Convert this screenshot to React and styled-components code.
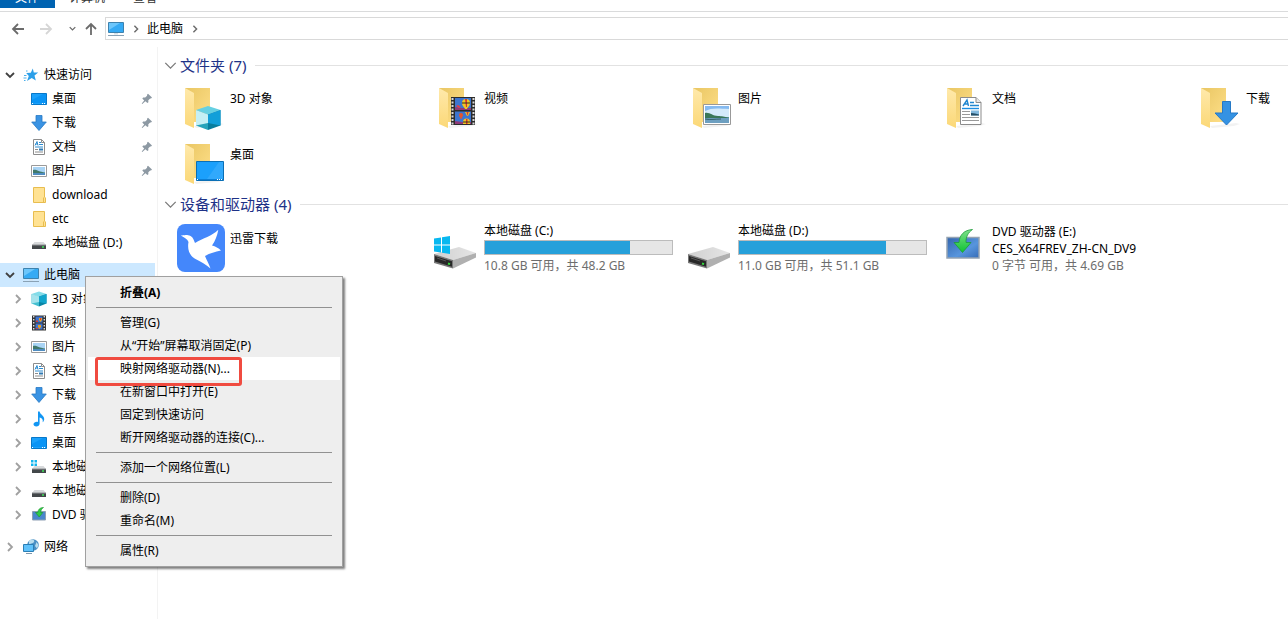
import React, { useState } from "react";
import styled, { createGlobalStyle } from "styled-components";

const GlobalStyle = createGlobalStyle`
  * {
    box-sizing: border-box;
  }
  body {
    margin: 0;
    overflow: hidden;
    background: #fff;
    color: #000;
    font-family: "Noto Sans", "Noto Sans CJK SC", sans-serif;
    font-size: 12px;
    line-height: 18px;
  }
  button {
    border: 0;
    padding: 0;
    background: none;
    color: inherit;
    font: inherit;
    text-align: left;
    white-space: nowrap;
  }
  svg {
    display: block;
    flex: none;
  }
`;

const Window = styled.div`
  display: flex;
  flex-direction: column;
  height: 100vh;
  overflow: hidden;
`;

const Ribbon = styled.div`
  display: flex;
  flex: none;
  height: 12px;
  padding-bottom: 3px;
  border-bottom: 1px solid #dadbdc;
`;

const RibbonTab = styled.button`
  display: flex;
  align-items: flex-end;
  height: 8px;
  overflow: hidden;
  padding: ${(p) => (p.$file ? "0 16px 1px 15px" : "0 14px 1px")};
  color: ${(p) => (p.$file ? "#fff" : "#333")};
  background: ${(p) => (p.$file ? "#0063b1" : "transparent")};
`;

const NavBar = styled.nav`
  display: flex;
  align-items: center;
  flex: none;
  height: 33px;
  padding-left: 10px;
`;

const NavButton = styled.button`
  display: flex;
  justify-content: center;
  width: ${(p) => p.$width}px;
  color: ${(p) => p.$color || "#6b6b6b"};
`;

const Address = styled.div`
  display: flex;
  flex: 1;
  align-items: center;
  height: 23px;
  margin-left: 1px;
  padding-left: 2px;
  border: 1px solid #d9d9d9;
  border-right: 0;
  color: #6b6b6b;
`;

const Crumb = styled.button`
  color: #000;
`;

const CrumbArrow = styled.span`
  display: flex;
  justify-content: center;
  width: 23px;
`;

const Body = styled.div`
  display: flex;
  flex: 1;
  min-height: 0;
`;

const Sidebar = styled.aside`
  flex: none;
  width: 158px;
  margin-top: 2px;
  padding-top: 16px;
  border-right: 1px solid #f3f3f3;
`;

const TreeGroup = styled.ul`
  list-style: none;
  margin: 0 0 8px;
  padding: 0;
`;

const TreeRow = styled.button`
  display: flex;
  align-items: center;
  width: 155px;
  height: 24px;
  padding-left: ${(p) => (p.$child ? 11 : 3)}px;
  padding-right: 2px;
  background: ${(p) => (p.$selected ? "#cce8ff" : "transparent")};
`;

const TreeArrow = styled.span`
  display: flex;
  justify-content: center;
  width: 14px;
  margin-right: 6px;
  color: ${(p) => (p.$open ? "#404040" : "#a0a0a0")};
`;

const TreeLabel = styled.span`
  flex: 1;
  margin-left: 5px;
`;

const Content = styled.main`
  flex: 1;
  min-width: 0;
  overflow: hidden;
  padding: 9px 0 0 6px;
`;

const GroupHeader = styled.h2`
  display: flex;
  align-items: center;
  height: 22px;
  margin: 0;
  color: #1e3287;
  font-size: 15px;
  font-weight: 400;
  line-height: 22px;
  white-space: nowrap;

  &::after {
    content: "";
    flex: 1;
    height: 1px;
    margin-left: 8px;
    background: #e2e2e2;
  }
`;

const GroupArrow = styled.span`
  margin-right: 3px;
  color: #7a7a7a;
`;

const TileGrid = styled.div`
  display: grid;
  grid-template-columns: repeat(5, 254px);
  grid-auto-rows: 56px;
  padding: ${(p) => (p.$roomy ? "5px 0 0 13px" : "4px 0 1px 13px")};
`;

const Tile = styled.div`
  display: flex;
  align-items: center;
  gap: 5px;
`;

const TileText = styled.div`
  display: flex;
  flex-direction: column;
  width: 189px;
  min-height: 36px;
  line-height: 17px;
  white-space: nowrap;
`;

const Muted = styled.span`
  color: #6d6d6d;
`;

const Usage = styled.div`
  height: 15px;
  margin: 1px 0 2px;
  border: 1px solid #bcbcbc;
  background: #e6e6e6;
`;

const UsageFill = styled.div`
  height: 100%;
  background: #26a0da;
`;

const Menu = styled.div`
  position: absolute;
  top: 276px;
  left: 85px;
  width: 258px;
  padding: 4px 2px;
  border: 1px solid #a0a0a0;
  background: #eee;
  box-shadow: 2px 2px 2px rgba(0, 0, 0, 0.5);
`;

const MenuItem = styled.button`
  position: relative;
  display: block;
  width: 100%;
  height: 23px;
  padding-left: 32px;
  line-height: 23px;
  font-weight: ${(p) => (p.$bold ? 700 : 400)};
  background: ${(p) => (p.$active ? "#fff" : "transparent")};
`;

const Separator = styled.hr`
  height: 1px;
  margin: 3px 8px;
  border: 0;
  background: #919191;
`;

const Highlight = styled.span`
  position: absolute;
  z-index: 1;
  top: 0;
  left: 7px;
  width: 147px;
  height: 29px;
  border: 3px solid #f04b40;
  border-radius: 3px;
`;

/* ---------- line icons ---------- */

const Chevron = ({ dir = "right", size = 10, w = 1.8 }) => (
  <svg width={size} height={size} viewBox="0 0 10 10" fill="none" stroke="currentColor" strokeWidth={w}>
    <path d={dir === "right" ? "M3 1l4 4-4 4" : "M1 3l4 4 4-4"} />
  </svg>
);

const Arrow = ({ rotate = 0 }) => (
  <svg width="14" height="14" viewBox="0 0 14 14" fill="none" stroke="currentColor" strokeWidth="1.8">
    <path d="M13 7H2M7 2L2 7l5 5" transform={`rotate(${rotate} 7 7)`} />
  </svg>
);

const PinIcon = () => (
  <svg width="12" height="12" viewBox="0 0 12 12" fill="#8d99a3">
    <path d="M7 .8L11 4.600l-1 .9-.8-.1-1.900 1.900.1 1.900-1 .9-2-1.900L1.300 11l-.6-.5 2.500-3.100-1.900-1.900.9-1 2 .1 1.900-1.800-.1-1z" />
  </svg>
);

/* ---------- small icons, 16px ---------- */

const Small = ({ children }) => (
  <svg width="16" height="16" viewBox="0 0 16 16">
    {children}
  </svg>
);

const MonitorIcon = () => (
  <Small>
    <path d="M.5 1.500h15v10H.5z" fill="#6cc6fb" stroke="#3d82ae" />
    <path d="M1 11V9l11-7h3v9z" fill="#35aaf4" />
    <path d="M6 12h4v1.500H6z" fill="#d5e0e8" />
    <path d="M0 14.500h16" stroke="#8aa2b5" />
  </Small>
);

const StarIcon = () => (
  <Small>
    <path d="M9.800 1.500l1 4 4.400.1-3.700 2.900 1.300 5-4.100-2.600-4.700 3.200 1.800-5.200L3.200 6l4.600-.2z" fill="#2b9fe9" />
    <path d="M4.500 4H3M3.500 8.500H1M3.500 11H.5M2.500 13.500H1" stroke="#4aaeea" />
  </Small>
);

const DesktopIcon = () => (
  <Small>
    <path d="M.5 2.500h15v11H.5z" fill="#1ba1fb" stroke="#0878c9" />
    <path d="M1 12V9l11-6h3v9z" fill="#0a94f5" />
    <path d="M1 12.500h1M11 12.500h1M13 12.500h1" stroke="#fff" />
  </Small>
);

const DownIcon = () => (
  <Small>
    <path d="M5 .5h6V7h4.300L8 15.500.7 7H5z" fill="#3a93e3" stroke="#2778c4" strokeWidth=".8" />
  </Small>
);

const DocIcon = () => (
  <Small>
    <path d="M2.500.5h8l3 3v12h-11z" fill="#fff" stroke="#8c8c8c" />
    <path d="M10.500.5v3h3" fill="none" stroke="#8c8c8c" />
    <path d="M4 6.500l2-4 1 4M4.500 5H7M8 3.500h2M8 5.500h4M4 8h8" stroke="#2d8cd0" fill="none" />
    <path d="M4 10.500h3M4 13h8" stroke="#8c8c8c" />
    <path d="M8 9.500h4v2H8z" fill="#2f79b2" />
  </Small>
);

const PicIcon = () => (
  <Small>
    <path d="M.5 2.500h15v11H.5z" fill="#fff" stroke="#9a9a9a" />
    <path d="M2 4h12v8H2z" fill="#a9d4f5" />
    <path d="M2 7c3-1 6 2 12 2.500v1H2z" fill="#41796b" />
    <path d="M2 10h12v2H2z" fill="#4f8cc0" />
  </Small>
);

const FolderIcon = () => (
  <Small>
    <path d="M2.500.5h11V10l1 1v4.500h-12z" fill="#ffe293" stroke="#e8bd4f" />
    <path d="M12.500 10.500v5" stroke="#e8bd4f" />
  </Small>
);

const DiskIcon = ({ system }) => (
  <Small>
    <path d="M3.500 7h9L15 10H1z" fill="#d7d9db" />
    <path d="M1 10h14v4H1z" fill="#43474a" />
    <path d="M1 10h14" stroke="#8f9295" />
    <path d="M11 12h2" stroke="#3ee05a" strokeWidth="1.500" />
    {system && <path d="M0 1h2.500v2.500H0zM3.500 1H6v2.500H3.500zM0 4.500h2.500V7H0zM3.500 4.500H6V7H3.500z" fill="#12b5ee" />}
  </Small>
);

const CubeIcon = () => (
  <Small>
    <path d="M8 .5L15.500 3 8 5.500.5 3z" fill="#83dce9" />
    <path d="M.5 3L8 5.500v10L.5 12.500z" fill="#43bfd0" />
    <path d="M.5 3L8 5.500V11L.5 12.500z" fill="#a5e3ec" />
    <path d="M15.500 3L8 5.500v10l7.500-3z" fill="#0a86a6" />
    <path d="M15.500 3L8 5.500V11l7.500 1.500z" fill="#12a5cc" />
  </Small>
);

const VideoIcon = () => (
  <Small>
    <path d="M1 .5h14v15H1z" fill="#333" />
    <path d="M4.500 1.500h7v6h-7zM4.500 8.500h7v6h-7z" fill="#3f74cf" />
    <path d="M2.700 1v14M13.300 1v14" stroke="#ddd" strokeDasharray="1.500 1.500" strokeWidth="1.400" />
    <path d="M8 3h3v2L9.500 7 8 5zM7 10h3v2l-1.500 2L7 12z" fill="#e8a11d" />
    <path d="M5 5.500h2v1.500H5zM9 3h1v2H9zM5 13h2v1H5z" fill="#d83b31" />
  </Small>
);

const MusicIcon = () => (
  <Small>
    <path d="M7 .5h1.600c.4 3 4.600 4 4.600 7.500 0 1.400-.6 2.500-1.500 3.300.6-3-.9-4.300-3.100-4.700v6.200c0 1.500-1.500 2.700-3.300 2.700S2.500 14.500 2.500 13.300c0-1.500 1.700-2.600 3.400-2.600.4 0 .8 0 1.100.2z" fill="#1296f3" />
  </Small>
);

const DvdIcon = () => (
  <Small>
    <path d="M1.500 4.500h13v8.500h-13z" fill="#4b87cd" stroke="#8fa0b3" />
    <path d="M12.500.5C8.500.5 7 3 6.800 5.500H4.500L8.200 10l3.600-4.500H9.700c.1-2 .8-3.800 2.800-5z" fill="#31cb46" stroke="#17932b" strokeWidth=".6" />
  </Small>
);

const NetworkIcon = () => (
  <Small>
    <circle cx="10" cy="6" r="5.800" fill="#4a8fc4" />
    <path d="M6 2c3-3 6-1 5 1s-4 1-5 3zM13.500 3l2 3-1.500 3.500L12 7z" fill="#b9dced" />
    <path d="M.5 5.500h10v7H.5z" fill="#5fc1fa" stroke="#2b7eb4" />
    <path d="M3 14.500h6" stroke="#7f99ad" />
  </Small>
);

/* ---------- tile icons, 48px ---------- */

const Large = ({ children }) => (
  <svg width="48" height="48" viewBox="0 0 48 48">
    {children}
  </svg>
);

const BigFolder = ({ children }) => (
  <Large>
    <defs>
      <linearGradient id="folderBack" x1="0" y1="0" x2="1" y2="1">
        <stop offset="0" stopColor="#e9c663" />
        <stop offset="1" stopColor="#ffe08a" />
      </linearGradient>
      <linearGradient id="folderFront" x1="0" y1="0" x2="0" y2="1">
        <stop offset="0" stopColor="#ffe9ab" />
        <stop offset="1" stopColor="#fbd877" />
      </linearGradient>
    </defs>
    <path d="M17 42l26-3 4 1-6 2-22 2z" fill="#000" opacity=".05" />
    <path d="M8 4h25v34H14z" fill="url(#folderBack)" />
    <path d="M8 4l9 5v35L8 40z" fill="url(#folderFront)" />
    {children}
  </Large>
);

const Folder3D = () => (
  <BigFolder>
    <path d="M31 22l12.500 4L31 30.500 19 26z" fill="#66d0e2" />
    <path d="M19 26l12 4.500V46l-12-4.500z" fill="#27a3ba" />
    <path d="M19 26l12 4.500V39l-12 2.500z" fill="#c5eff4" />
    <path d="M43.500 26L31 30.500V46l12.500-4.500z" fill="#087d9d" />
    <path d="M43.500 26L31 30.500V39l12.500 2.500z" fill="#129fd9" />
  </BigFolder>
);

const FolderDesktop = () => (
  <BigFolder>
    <path d="M19.500 21.500h27v19h-27z" fill="#1ba0fc" stroke="#0b6fb5" />
    <path d="M30 39l12-17h4v17z" fill="#48b1fb" opacity=".5" />
    <path d="M20 39.500h26" stroke="#0b7fd6" />
    <path d="M20 39.500h1M40 39.500h1M42 39.500h1M44 39.500h1" stroke="#fff" />
  </BigFolder>
);

const FolderVideo = () => (
  <BigFolder>
    <path d="M20 13h24v28H20z" fill="#2c2c2c" />
    <path d="M21.500 14v27M42.500 14v27" stroke="#d8d8d8" strokeWidth="2" strokeDasharray="2 1.500" />
    <path d="M24 14h16v12H24zM24 27.500h16V40H24z" fill="#3d75cf" />
    <path d="M24 23l6 1 10 0v2H24zM24 37l7 1 9 0v2H24z" fill="#8f3a78" />
    <path d="M31 19a4 4 0 018 0c0 3-2.500 4-3 6h-2c-.5-2-3-3-3-6zM32 38a3.500 3.500 0 017 0v2h-7zM34 28h5l-2 4h-1z" fill="#f0c524" />
    <path d="M34 15h2v8h-1zM35 35h1.500v5H35zM35.500 28h2l-1 4z" fill="#d8352d" />
    <path d="M31 19h8M32 38h7" stroke="#302a20" strokeWidth="1" />
    <path d="M25 22l2-1 3 2-2 1z" fill="#e63c44" />
    <path d="M28 31a2 2 0 014 0c0 2-1.500 2-1.500 4h-1c0-2-1.500-2-1.500-4z" fill="#e4552c" />
  </BigFolder>
);

const FolderPictures = () => (
  <BigFolder>
    <path d="M18.500 20.500h27v20h-27z" fill="#fff" stroke="#999" />
    <path d="M20 22h24v17H20z" fill="#85baf0" />
    <path d="M20 27c6-3 10-3 24-2v8H20z" fill="#d4eafa" />
    <path d="M20 29c5-1 7 3 13 3 4 0 6 1 11 1.500v1.500H20z" fill="#397758" />
    <path d="M20 34h24v5H20z" fill="#6d9fc0" />
    <path d="M20 35c6 1 10 0 16 0" stroke="#315e66" fill="none" />
  </BigFolder>
);

const FolderDocs = () => (
  <BigFolder>
    <path d="M21.500 13.500H37l5 5v22H21.500z" fill="#fff" stroke="#8b8b8b" />
    <path d="M37 13.500v5h5" fill="#e8e8e8" stroke="#8b8b8b" />
    <path d="M24 22l4-6 1.500 6M25.500 20h4M31 18.500h4M31 21.500h9" fill="none" stroke="#2186cf" strokeWidth="1.400" />
    <path d="M23 24.500h17" stroke="#1c8ee2" strokeWidth="1.400" />
    <path d="M23 27.500h8M23 30.500h8M23 33.500h17M23 36.500h17" stroke="#999" />
    <path d="M32 26.500h8v5h-8z" fill="#83b9de" />
    <path d="M32 29l4 .5 4 1v1h-8z" fill="#254e65" />
  </BigFolder>
);

const FolderDownloads = () => (
  <BigFolder>
    <path d="M29.500 17.500h8V29H45L33.500 41 22 29h7.500z" fill="#3492e3" stroke="#2579c6" />
  </BigFolder>
);

const XunleiIcon = () => (
  <Large>
    <rect width="48" height="48" rx="8" fill="#4487fb" />
    <path
      d="M3.700 11.500c3.300.2 5-.7 7.300-.3 4 .4 5.500 3.300 7 7.800 8-5 17-7 23.300-13.300-1 6-3 11-6.300 15.800 3.500 1 6.500 2.500 9 5C38 28 33 29 28 32c1.500 4 4 8 5.500 12.500-4.500-4-9.500-7-15.500-9.800-5-3-8-8.700-6.500-16.700-1-3-4-4.500-7.800-6.500z"
      fill="#fff"
    />
  </Large>
);

const DriveIcon = ({ system }) => (
  <Large>
    <defs>
      <linearGradient id="driveTop" x1="0" y1="0" x2="1" y2="0">
        <stop offset="0" stopColor="#d0d0d0" />
        <stop offset="1" stopColor="#e5e5e5" />
      </linearGradient>
    </defs>
    <path d="M3 30l25-7 17 6-23 7z" fill="url(#driveTop)" />
    <path d="M45 29v4.500L22 44.500V36z" fill="#b0b0b0" />
    <path d="M3 30l19 6v8.500L3 39z" fill="#777" />
    <path d="M4 32l17 5.200v5.500L4 37.500z" fill="#282828" />
    <path d="M6 34l9 3" stroke="#555" />
    <path d="M17 39.500l2 .6" stroke="#33de3d" strokeWidth="2" />
    {system && (
      <path d="M3 14.500l7-1V20.500H3zM11 13.300l8-1.300v8.500h-8zM3 21.500h7v7l-7-1zM11 21.500h8V30l-8-1.200z" fill="#08b8f0" />
    )}
  </Large>
);

const DvdDrive = () => (
  <Large>
    <defs>
      <linearGradient id="dvdScreen" x1="0" y1="0" x2="1" y2="1">
        <stop offset="0" stopColor="#3264ad" />
        <stop offset=".6" stopColor="#5795dd" />
        <stop offset="1" stopColor="#366cb7" />
      </linearGradient>
      <linearGradient id="dvdArrow" x1="0" y1="0" x2="0" y2="1">
        <stop offset="0" stopColor="#7fe08b" />
        <stop offset="1" stopColor="#0fc332" />
      </linearGradient>
    </defs>
    <path d="M8 13.500h32v20.500H8z" fill="url(#dvdScreen)" stroke="#94a3b3" strokeWidth="1.500" />
    <path d="M33.500 5.500C25 6 20.500 11 20 18.500h-5L23.500 28.500 32 18.500h-5c-.2-5.500 2-10 6.500-13z" fill="url(#dvdArrow)" stroke="#1c9a39" strokeWidth=".8" />
  </Large>
);

const quickAccess = [
  { label: "桌面", icon: DesktopIcon, pinned: true },
  { label: "下载", icon: DownIcon, pinned: true },
  { label: "文档", icon: DocIcon, pinned: true },
  { label: "图片", icon: PicIcon, pinned: true },
  { label: "download", icon: FolderIcon },
  { label: "etc", icon: FolderIcon },
  { label: "本地磁盘 (D:)", icon: DiskIcon },
];

const thisPc = [
  { label: "3D 对象", icon: CubeIcon },
  { label: "视频", icon: VideoIcon },
  { label: "图片", icon: PicIcon },
  { label: "文档", icon: DocIcon },
  { label: "下载", icon: DownIcon },
  { label: "音乐", icon: MusicIcon },
  { label: "桌面", icon: DesktopIcon },
  { label: "本地磁盘 (C:)", icon: DiskIcon, system: true },
  { label: "本地磁盘 (D:)", icon: DiskIcon },
  { label: "DVD 驱动器", icon: DvdIcon },
];

const folders = [
  { label: "3D 对象", icon: Folder3D },
  { label: "视频", icon: FolderVideo },
  { label: "图片", icon: FolderPictures },
  { label: "文档", icon: FolderDocs },
  { label: "下载", icon: FolderDownloads },
  { label: "桌面", icon: FolderDesktop },
];

const devices = [
  { label: "迅雷下载", icon: XunleiIcon },
  { label: "本地磁盘 (C:)", icon: DriveIcon, system: true, free: 10.8, total: 48.2, info: "10.8 GB 可用，共 48.2 GB" },
  { label: "本地磁盘 (D:)", icon: DriveIcon, free: 11, total: 51.1, info: "11.0 GB 可用，共 51.1 GB" },
  { label: "DVD 驱动器 (E:)", icon: DvdDrive, volume: "CES_X64FREV_ZH-CN_DV9", info: "0 字节 可用，共 4.69 GB" },
];

const menu = [
  [{ label: "折叠(A)", bold: true }],
  [
    { label: "管理(G)" },
    { label: "从“开始”屏幕取消固定(P)" },
    { label: "映射网络驱动器(N)...", marked: true },
    { label: "在新窗口中打开(E)" },
    { label: "固定到快速访问" },
    { label: "断开网络驱动器的连接(C)..." },
  ],
  [{ label: "添加一个网络位置(L)" }],
  [{ label: "删除(D)" }, { label: "重命名(M)" }],
  [{ label: "属性(R)" }],
];

function TreeItem({ item, child, arrow, selected, onClick }) {
  const Icon = item.icon;
  return (
    <li>
      <TreeRow $child={child} $selected={selected} onClick={onClick}>
        <TreeArrow $open={arrow === "down"}>{arrow && <Chevron dir={arrow} />}</TreeArrow>
        <Icon system={item.system} />
        <TreeLabel>{item.label}</TreeLabel>
        {item.pinned && <PinIcon />}
      </TreeRow>
    </li>
  );
}

function TileItem({ item }) {
  const Icon = item.icon;
  return (
    <Tile>
      <Icon system={item.system} />
      <TileText>
        <span>{item.label}</span>
        {item.total && (
          <Usage>
            <UsageFill style={{ width: `${((item.total - item.free) / item.total) * 100}%` }} />
          </Usage>
        )}
        {item.volume && <span>{item.volume}</span>}
        {item.info && <Muted>{item.info}</Muted>}
      </TileText>
    </Tile>
  );
}

function Group({ title, count, items, roomy }) {
  return (
    <section>
      <GroupHeader>
        <GroupArrow>
          <Chevron dir="down" size={13} w={1} />
        </GroupArrow>
        {title} ({count})
      </GroupHeader>
      <TileGrid $roomy={roomy}>
        {items.map((item) => (
          <TileItem key={item.label} item={item} />
        ))}
      </TileGrid>
    </section>
  );
}

function App() {
  const [active, setActive] = useState("映射网络驱动器(N)...");
  const [selected, setSelected] = useState("此电脑");

  return (
    <Window>
      <GlobalStyle />
      <Ribbon>
        <RibbonTab $file>文件</RibbonTab>
        <RibbonTab>计算机</RibbonTab>
        <RibbonTab>查看</RibbonTab>
      </Ribbon>
      <NavBar>
        <NavButton $width={16} aria-label="后退"><Arrow /></NavButton>
        <NavButton $width={40} $color="#d6d6d6" aria-label="前进"><Arrow rotate={180} /></NavButton>
        <NavButton $width={12} aria-label="最近"><Chevron dir="down" size={7} /></NavButton>
        <NavButton $width={26} aria-label="上移"><Arrow rotate={90} /></NavButton>
        <Address>
          <MonitorIcon />
          <CrumbArrow><Chevron size={8} /></CrumbArrow>
          <Crumb>此电脑</Crumb>
          <CrumbArrow><Chevron size={8} /></CrumbArrow>
        </Address>
      </NavBar>
      <Body>
        <Sidebar>
          <TreeGroup>
            <TreeItem item={{ label: "快速访问", icon: StarIcon }} arrow="down" />
            {quickAccess.map((item) => (
              <TreeItem key={item.label} item={item} child />
            ))}
          </TreeGroup>
          <TreeGroup>
            <TreeItem
              item={{ label: "此电脑", icon: MonitorIcon }}
              arrow="down"
              selected={selected === "此电脑"}
              onClick={() => setSelected("此电脑")}
            />
            {thisPc.map((item) => (
              <TreeItem key={item.label} item={item} arrow="right" child />
            ))}
          </TreeGroup>
          <TreeGroup>
            <TreeItem item={{ label: "网络", icon: NetworkIcon }} arrow="right" />
          </TreeGroup>
        </Sidebar>
        <Content>
          <Group title="文件夹" count={7} items={folders} />
          <Group title="设备和驱动器" count={4} items={devices} roomy />
        </Content>
      </Body>
      <Menu role="menu">
        {menu.map((group, index) => (
          <React.Fragment key={index}>
            {index > 0 && <Separator />}
            {group.map((item) => (
              <MenuItem
                key={item.label}
                role="menuitem"
                $bold={item.bold}
                $active={active === item.label}
                onMouseEnter={() => setActive(item.label)}
              >
                {item.label}
                {item.marked && <Highlight />}
              </MenuItem>
            ))}
          </React.Fragment>
        ))}
      </Menu>
    </Window>
  );
}

export default App;
